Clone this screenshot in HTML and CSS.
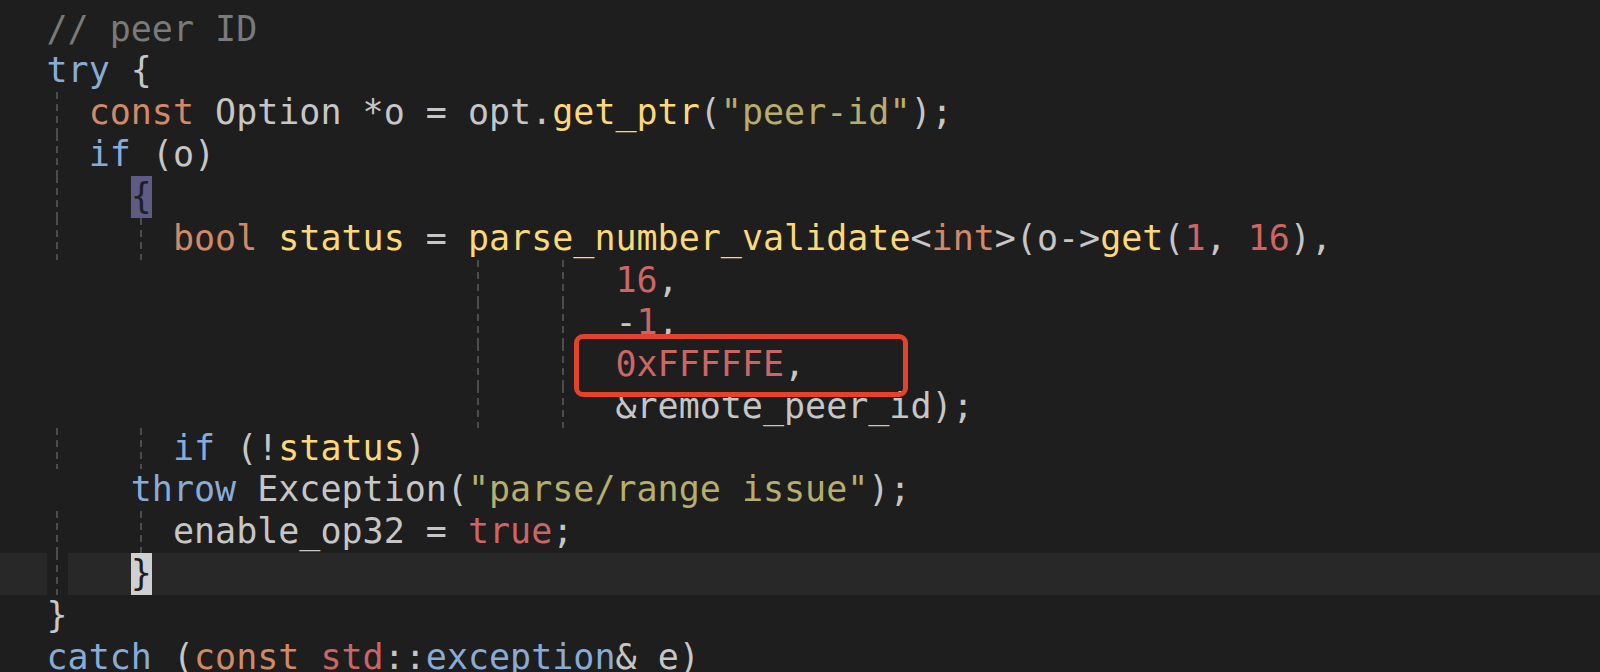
FILE: index.html
```html
<!DOCTYPE html>
<html>
<head>
    <meta charset="utf-8">
    <link rel="stylesheet" href="styles.css">
</head>
<body>

    <div class="editor">

        <div class="line"><span class="cm">// peer ID</span></div>
        <div class="line"><span class="kw">try</span> {</div>
        <div class="line"><span class="guide c0"></span>  <span class="st">const</span> Option *o = opt.<span class="fn">get_ptr</span>(<span class="str">"peer-id"</span>);</div>
        <div class="line"><span class="guide c0"></span>  <span class="kw">if</span> (o)</div>
        <div class="line"><span class="guide c0"></span>    <span class="match-open">{</span></div>
        <div class="line"><span class="guide c0"></span><span class="guide c4"></span>      <span class="st">bool</span> <span class="fn">status</span> = <span class="fn">parse_number_validate</span>&lt;<span class="st">int</span>&gt;(o-&gt;<span class="fn">get</span>(<span class="num">1</span>, <span class="num">16</span>),</div>
        <div class="line"><span class="guide c20"></span><span class="guide c24"></span>                           <span class="num">16</span>,</div>
        <div class="line"><span class="guide c20"></span><span class="guide c24"></span>                           -<span class="num">1</span>,</div>
        <div class="line"><span class="guide c20"></span><span class="guide c24"></span>                           <span class="num">0xFFFFFE</span>,</div>
        <div class="line"><span class="guide c20"></span><span class="guide c24"></span>                           &amp;remote_peer_id);</div>
        <div class="line"><span class="guide c0"></span><span class="guide c4"></span>      <span class="kw">if</span> (!<span class="fn">status</span>)</div>
        <div class="line">    <span class="kw">throw</span> Exception(<span class="str">"parse/range issue"</span>);</div>
        <div class="line"><span class="guide c0"></span><span class="guide c4"></span>      enable_op32 = <span class="num">true</span>;</div>
        <div class="line current"><span class="guide c0 mask"></span>    <span class="match-close">}</span></div>
        <div class="line">}</div>
        <div class="line"><span class="kw">catch</span> (<span class="st">const</span> <span class="num">std</span>::<span class="kw">exception</span>&amp; e)</div>

        <div class="note"></div>
    </div>

</body>
</html>
```

FILE: styles.css
```css
/*Page and editor surface.*/
html, body {
    margin: 0;
    height: 100%;
    background-color: #1e1e1e;
    overflow: hidden;
}

.editor {
    position: relative;
    padding-top: 8.6px;
    font-family: "DejaVu Sans Mono", "Liberation Mono", monospace;
    font-size: 35px;
    line-height: 41.9px;
    color: #c6c6c6;
}

.line {
    position: relative;
    height: 41.9px;
    padding-left: 46.5px;
    white-space: pre;
}

.current {
    background-color: #282828;
}

/*Syntax colours.*/
.cm { color: #7a7a7a; }
.kw { color: #88acd8; }
.st { color: #d28a66; }
.fn { color: #fcd877; }
.str { color: #b6ae6a; }
.num { color: #cd6564; }

/*Matching brackets.*/
.match-open {
    display: inline-block;
    background-color: #5e5b84;
    color: #1f1f2a;
}

.match-close {
    display: inline-block;
    background-color: #d0d0d0;
    color: #1e1e1e;
}

/*Indent guides, one column cell wide, dashed line in its middle.*/
.guide {
    position: absolute;
    top: 0;
    width: 1ch;
    height: 100%;
    background-image: repeating-linear-gradient(to bottom, #4c4c4c 0 7px, transparent 7px 12px);
    background-size: 2px 100%;
    background-position: center top;
    background-repeat: no-repeat;
}

.c0 { left: 46.5px; }
.c4 { left: calc(46.5px + 4ch); }
.c20 { left: calc(46.5px + 20ch); }
.c24 { left: calc(46.5px + 24ch); }

.mask {
    background-color: #1e1e1e;
}

/*Red annotation box round the hex value.*/
.note {
    position: absolute;
    left: 574px;
    top: 334px;
    width: 324px;
    height: 53px;
    border: 5px solid #e5422c;
    border-radius: 9px;
}
```
